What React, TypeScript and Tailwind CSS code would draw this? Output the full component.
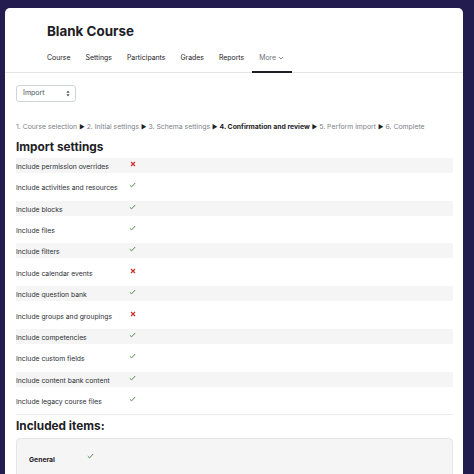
import React from 'react'

const font = { fontFamily: 'Inter, "Noto Sans", sans-serif' }

const navItems = ['Course', 'Settings', 'Participants', 'Grades', 'Reports']

const settings: [string, boolean][] = [
  ['Include permission overrides', false],
  ['Include activities and resources', true],
  ['Include blocks', true],
  ['Include files', true],
  ['Include filters', true],
  ['Include calendar events', false],
  ['Include question bank', true],
  ['Include groups and groupings', false],
  ['Include competencies', true],
  ['Include custom fields', true],
  ['Include content bank content', true],
  ['Include legacy course files', true],
]

const steps = [
  '1. Course selection',
  '2. Initial settings',
  '3. Schema settings',
  '4. Confirmation and review',
  '5. Perform import',
  '6. Complete',
]

function Check() {
  return (
    <svg width="7" height="6" viewBox="0 0 7 6" className="block">
      <path d="M0.8 3.2 L2.6 4.9 L6.2 1" fill="none" stroke="#4f8a4f" strokeWidth="1" />
    </svg>
  )
}

function Cross() {
  return (
    <svg width="6" height="6" viewBox="0 0 6 6" className="block">
      <path d="M1 1 L5 5 M5 1 L1 5" fill="none" stroke="#c9302c" strokeWidth="1.2" />
    </svg>
  )
}

function SettingRow({ label, on, shaded }: { label: string; on: boolean; shaded: boolean }) {
  return (
    <div className="h-[21.36px]">
      <div className={`flex h-[15px] ${shaded ? 'bg-[#f5f5f5]' : ''}`}>
        <div className="w-[113px] whitespace-nowrap pt-[4px] text-[6.8px] leading-[10px] text-[#2b2f33]">{label}</div>
        <div className="flex w-[7px] justify-center pt-[3px]">{on ? <Check /> : <Cross />}</div>
      </div>
    </div>
  )
}

export default function App() {
  return (
    <div className="min-h-[474px] bg-[#231c4f] pl-[5px] pr-[11px] pt-[8px]" style={font}>
      <div className="h-[466px] overflow-hidden rounded-t-[5px] bg-white">
        {/* header */}
        <div className="border-b border-[#e3e5e8]">
          <div className="pl-[42px] pt-[14px]">
            <h1 className="text-[13.4px] font-bold leading-[18px] text-[#1d2125]">Blank Course</h1>
            <nav className="-ml-[7.5px] mt-[4px] flex">
              {navItems.map((item) => (
                <div key={item} className="flex h-[28px] items-center px-[7.5px] text-[6.9px] text-[#1d2125]">
                  {item}
                </div>
              ))}
              <div className="relative flex h-[28px] items-center px-[7.5px] text-[6.9px] text-[#6a737b]">
                More
                <svg width="6" height="4" viewBox="0 0 6 4" className="ml-[2px]">
                  <path d="M1 1 L3 3 L5 1" fill="none" stroke="#6a737b" strokeWidth="0.8" />
                </svg>
                <div className="absolute bottom-[-1px] left-0 right-0 h-[2px] bg-[#1d2125]" />
              </div>
            </nav>
          </div>
        </div>

        {/* content */}
        <div className="pl-[11px] pr-[10px]">
          <div className="mt-[12px] flex h-[17px] w-[60px] items-center justify-between rounded-[3px] border border-[#ced4da] pl-[6px] pr-[5px] text-[7px] text-[#495057]">
            <span>Import</span>
            <svg width="4" height="7" viewBox="0 0 4 7">
              <path d="M2 0.5 L3.6 2.8 L0.4 2.8 Z M2 6.5 L3.6 4.2 L0.4 4.2 Z" fill="#495057" />
            </svg>
          </div>

          <div className="mt-[20px] flex items-center whitespace-nowrap text-[6.85px] leading-[10px]">
            {steps.map((s, i) => (
              <React.Fragment key={s}>
                {i > 0 && <span className="mx-[2px] text-[6px] text-[#1d2125]">►</span>}
                <span className={i === 3 ? 'font-bold text-[#1d2125]' : 'text-[#7b8288]'}>{s}</span>
              </React.Fragment>
            ))}
          </div>

          <h2 className="mt-[7px] text-[11.8px] font-bold leading-[16px] text-[#1d2125]">Import settings</h2>

          <div className="mt-[3px]">
            {settings.map(([label, on], i) => (
              <SettingRow key={label} label={label} on={on} shaded={i % 2 === 0} />
            ))}
          </div>
          <div className="h-px bg-[#ececec]" />

          <h2 className="mt-[3px] text-[11.8px] font-bold leading-[16px] text-[#1d2125]">Included items:</h2>

          <div className="mt-[4px] rounded-[4px] border border-[#e6e6e6] bg-[#f5f5f5] pb-[20px] pl-[12px] pt-[14px]">
            <div className="flex">
              <div className="w-[58px] pt-[2px] text-[6.8px] font-bold leading-[10px] text-[#1d2125]">General</div>
              <Check />
            </div>
          </div>
        </div>
      </div>
    </div>
  )
}
